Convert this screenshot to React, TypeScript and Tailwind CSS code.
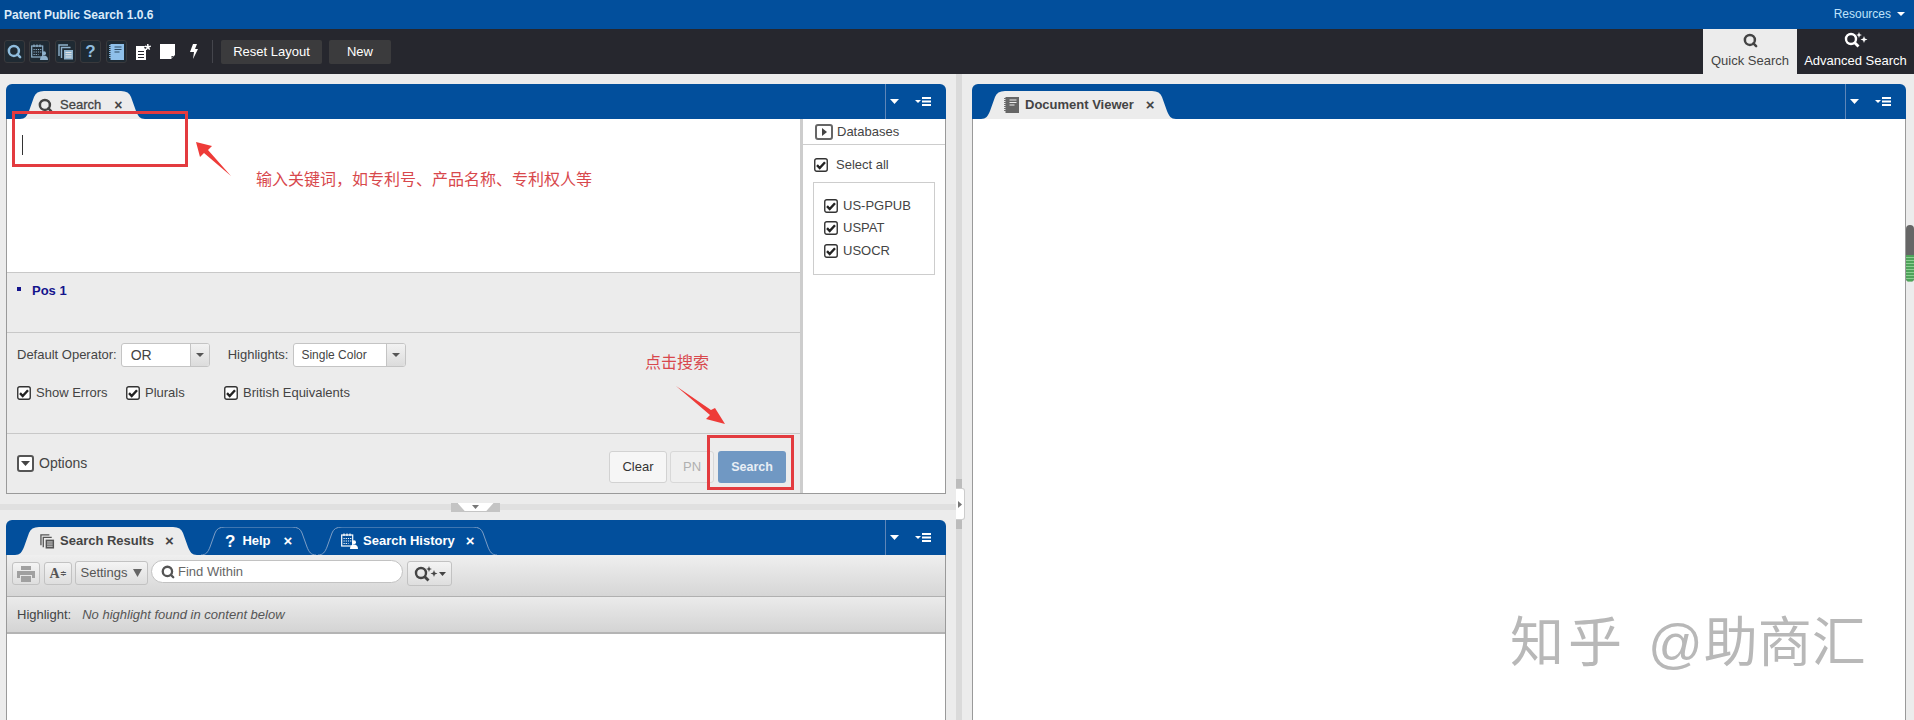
import { Search } from 'lucide-react'
import type { ReactNode } from 'react'

const BLUE = 'bg-[#024f9c]'
const ICON_BOX =
  'flex h-[23px] w-[21px] items-center justify-center rounded-[3px] border border-[#39393c] bg-[#1f2a33]'

function Caret({ className = 'fill-white', w = 9, h = 5 }: { className?: string; w?: number; h?: number }) {
  return (
    <svg width={w} height={h} viewBox="0 0 9 5" preserveAspectRatio="none" className={`shrink-0 ${className}`}>
      <path d="M0 0h9L4.5 5z" />
    </svg>
  )
}

function CheckBox() {
  return (
    <svg width="14" height="14" viewBox="0 0 14 14" className="shrink-0">
      <rect x="0.75" y="0.75" width="12.5" height="12.5" rx="2" fill="#fff" stroke="#333" strokeWidth="1.4" />
      <path d="M3 7.2l2.7 2.8L11 4.2" fill="none" stroke="#222" strokeWidth="2.4" />
    </svg>
  )
}

function CopiesIcon({ color, size = 16 }: { color: string; size?: number }) {
  return (
    <svg width={size} height={size} viewBox="0 0 16 16" fill="none" stroke={color}>
      <path d="M1 12V1h9" strokeWidth="1.4" />
      <path d="M3.5 14V3.5h9" strokeWidth="1.4" />
      <rect x="6" y="6" width="9" height="9.5" fill={color} stroke="none" />
      <path d="M7.5 8.5h6M7.5 10.7h6M7.5 13h6" stroke="#e4e4e4" strokeWidth="1" />
    </svg>
  )
}

function CalendarIcon({ color, paper = 'none' }: { color: string; paper?: string }) {
  return (
    <svg width="17" height="16" viewBox="0 0 17 16" fill="none">
      <rect x="0.7" y="2" width="11" height="11" fill={paper} stroke={color} strokeWidth="1.2" />
      <path d="M3 0.5v2.5M6 0.5v2.5M9 0.5v2.5" stroke={color} strokeWidth="1.2" />
      <path d="M2.5 5.5h8M2.5 8h8M2.5 10.5h5" stroke={color} strokeWidth="1.2" strokeDasharray="1.2 1" />
      <circle cx="13" cy="9.2" r="2" fill={color} />
      <path d="M9 16c0-3 1.5-4.5 4-4.5s4 1.500 4 4.500z" fill={color} />
    </svg>
  )
}

function NotebookIcon({ fill, line }: { fill: string; line: string }) {
  return (
    <svg width="15" height="16" viewBox="0 0 15 16">
      <rect x="1.500" y="0" width="13.500" height="16" fill={fill} />
      <path d="M0 1.500h3M0 3.500h3M0 5.500h3M0 7.500h3M0 9.500h3M0 11.500h3M0 13.500h3" stroke={fill} strokeWidth="0.9" />
      <path d="M5.500 3h7M5.500 5.500h7M5.500 8h5" stroke={line} strokeWidth="1.100" />
    </svg>
  )
}

function PlusSearchIcon({ color }: { color: string }) {
  return (
    <svg width="24" height="16" viewBox="0 0 24 16" fill="none">
      <circle cx="7" cy="7" r="5" stroke={color} strokeWidth="2.400" />
      <path d="M10.500 10.500l4 4" stroke={color} strokeWidth="2.800" />
      <path d="M15 0l.8 2.200L18 3l-2.200.8L15 6l-.8-2.200L12 3l2.200-.8zM20 4l.9 2.600L23.500 7.500l-2.600.9L20 11l-.9-2.600-2.600-.9 2.600-.9z" fill={color} />
    </svg>
  )
}

function Tab({
  width,
  active,
  className = '',
  children,
}: {
  width: number
  active?: boolean
  className?: string
  children: ReactNode
}) {
  const h = 28
  const d = `M0 ${h} C5 ${h} 7 ${h - 3} 9 ${h - 8} L14 6 Q16 0 24 0 H${width - 24} Q${width - 16} 0 ${width - 14} 6 L${width - 9} ${h - 8} C${width - 7} ${h - 3} ${width - 5} ${h} ${width} ${h}`
  return (
    <div
      style={{ width }}
      className={`relative flex h-[28px] shrink-0 items-center text-[13px] font-bold ${active ? 'text-[#444]' : 'text-white'} ${className}`}
    >
      <svg width={width} height={h} className="absolute top-0 left-0">
        <path d={d} fill={active ? '#ececec' : 'none'} stroke={active ? 'none' : '#7d9ec6'} />
      </svg>
      <div className="relative flex items-center">{children}</div>
    </div>
  )
}

function PanelHeader({ children }: { children: ReactNode }) {
  return (
    <div className={`flex h-[35px] shrink-0 items-end rounded-t-[6px] ${BLUE}`}>
      <div className="flex min-w-0 flex-1 items-end">{children}</div>
      <div className="flex h-full w-[61px] shrink-0 items-center border-l border-[#5e86b8] pl-[4px]">
        <Caret />
        <div className="ml-[16px] flex items-center gap-[1px]">
          <Caret w={6} h={3} />
          <svg width="9" height="9" viewBox="0 0 9 9" className="fill-white">
            <path d="M0 0h9v2H0zM0 3.500h9v2H0zM0 7h9v2H0z" />
          </svg>
        </div>
      </div>
    </div>
  )
}

function Select({ label, width, gap, text, textClass }: { label: string; width: string; gap: string; text: string; textClass: string }) {
  return (
    <div className={`flex items-center ${gap}`}>
      <span>{label}</span>
      <div className={`flex h-[24px] ${width} overflow-hidden rounded-[3px] border border-[#c4c4c4] bg-white`}>
        <div className={`flex flex-1 items-center ${textClass}`}>{text}</div>
        <div className="flex w-[19px] items-center justify-center border-l border-[#c4c4c4] bg-gradient-to-b from-[#f2f2f2] to-[#dcdcdc]">
          <Caret className="fill-[#555]" w={8} h={4} />
        </div>
      </div>
    </div>
  )
}

function CheckLabel({ label, className = '' }: { label: string; className?: string }) {
  return (
    <label className={`flex items-center gap-[5px] ${className}`}>
      <CheckBox />
      {label}
    </label>
  )
}

function SearchPanel() {
  return (
    <section className="flex h-[410px] shrink-0 flex-col">
      <PanelHeader>
        <Tab width={125} active className="ml-[14px] pl-[18px]">
          <Search size={15} strokeWidth={4} className="mr-[7px] text-[#444]" />
          <span className="font-normal [-webkit-text-stroke:0.3px_#444]">Search</span>
          <span className="ml-[13px] text-[14px]">×</span>
        </Tab>
      </PanelHeader>
      <div className="flex min-h-0 flex-1 border-x border-b border-[#9a9a9a]">
        <div className="flex min-w-0 flex-1 flex-col">
          <div className="h-[154px] shrink-0 border-b border-[#c8c8c8] bg-white pt-[16px] pl-[15px]">
            <div className="h-[20px] w-px bg-[#333]" />
          </div>
          <div className="flex h-[60px] shrink-0 items-start gap-[11px] border-b border-[#c8c8c8] pt-[8px] pl-[10px] text-[13px] font-bold text-[#14148c]">
            <span className="mt-[6px] h-[4px] w-[4px] bg-[#14148c]" />
            Pos 1
          </div>
          <div className="h-[101px] shrink-0 border-b border-[#c8c8c8] pt-[10px] pl-[10px] text-[13px] text-[#444]">
            <div className="flex items-center gap-[18px]">
              <Select label="Default Operator:" width="w-[89px]" gap="gap-[4px]" text="OR" textClass="pl-[9px] text-[14px]" />
              <Select label="Highlights:" width="w-[113px]" gap="gap-[5px]" text="Single Color" textClass="pl-[7px] text-[12px]" />
            </div>
            <div className="mt-[16px] flex items-center">
              <CheckLabel label="Show Errors" className="w-[109px]" />
              <CheckLabel label="Plurals" className="w-[98px]" />
              <CheckLabel label="British Equivalents" />
            </div>
          </div>
          <div className="flex flex-1 items-center justify-between pr-[14px] pl-[10px]">
            <div className="flex items-center gap-[5px] text-[14px] text-[#444]">
              <span className="flex h-[17px] w-[17px] items-center justify-center rounded-[3px] border-2 border-[#555] bg-white">
                <Caret className="fill-[#444]" w={9} h={5} />
              </span>
              Options
            </div>
            <div className="mt-[7px] flex h-[32px] items-stretch text-[13px]">
              <button className="w-[58px] rounded-[3px] border border-[#d2d2d2] bg-[#f6f6f6] text-[#333]">Clear</button>
              <button className="ml-[3px] w-[44px] rounded-[3px] border border-[#d8d8d8] bg-[#efefef] text-[#b0b0b0]">PN</button>
              <button className="ml-[4px] w-[68px] rounded-[3px] bg-[#7098c3] text-[12.5px] font-bold text-[#e8eef5]">Search</button>
            </div>
          </div>
        </div>
        <aside className="w-[145px] shrink-0 border-l-[3px] border-[#cdcdcd] bg-white text-[13px] text-[#444]">
          <div className="flex h-[26px] items-center gap-[4px] border-b border-[#cdcdcd] pl-[12px]">
            <span className="flex h-[16px] w-[18px] items-center justify-center rounded-[3px] border-2 border-[#666]">
              <svg width="5" height="8" viewBox="0 0 5 8" className="fill-[#444]"><path d="M0 0l5 4-5 4z" /></svg>
            </span>
            Databases
          </div>
          <div className="flex items-center gap-[8px] pt-[10px] pl-[11px]">
            <CheckBox />
            Select all
          </div>
          <div className="mt-[7px] ml-[10px] flex h-[93px] w-[122px] flex-col justify-center gap-[3px] border border-[#cdcdcd] pl-[10px]">
            <CheckLabel label="US-PGPUB" />
            <CheckLabel label="USPAT" />
            <CheckLabel label="USOCR" />
          </div>
        </aside>
      </div>
    </section>
  )
}

function ResultsPanel() {
  const toolBtn = 'flex items-center justify-center rounded-[3px] border border-[#c2c2c2] bg-gradient-to-b from-[#f4f4f4] to-[#dedede]'
  return (
    <section className="flex min-h-0 flex-1 flex-col">
      <PanelHeader>
        <Tab width={182} active className="ml-[9px] pl-[25px]">
          <CopiesIcon color="#555" size={15} />
          <span className="ml-[5px]">Search Results</span>
          <span className="ml-[11px] text-[15px]">×</span>
        </Tab>
        <Tab width={115} className="ml-[4px] pl-[24px]">
          <span className="text-[17px] leading-none">?</span>
          <span className="ml-[7px]">Help</span>
          <span className="ml-[13px] text-[15px]">×</span>
        </Tab>
        <Tab width={179} className="ml-[2px] pl-[23px]">
          <CalendarIcon color="#fff" />
          <span className="ml-[5px]">Search History</span>
          <span className="ml-[11px] text-[15px]">×</span>
        </Tab>
      </PanelHeader>
      <div className="flex min-h-0 flex-1 flex-col border-x border-[#9a9a9a] bg-white">
        <div className="flex h-[42px] shrink-0 items-start border-b border-[#b0b0b0] bg-gradient-to-b from-[#efefef] to-[#d6d6d6] pt-[5px] pl-[5px] text-[13px] text-[#555]">
          <button className={`mt-[2px] h-[23px] w-[28px] ${toolBtn}`}>
            <svg width="18" height="16" viewBox="0 0 18 16" className="fill-[#a0a0a0]">
              <path d="M4 0h10v4H4zM0 5h18v7h-3V9H3v3H0zM4 10h10v6H4z" />
            </svg>
          </button>
          <button className={`mt-[2px] ml-[4px] h-[23px] w-[28px] text-[14px] font-bold text-[#555] [font-family:'Liberation_Serif',serif] ${toolBtn}`}>
            A<span className="text-[8px] font-normal">≑</span>
          </button>
          <button className={`mt-[1px] ml-[3px] h-[24px] w-[73px] gap-[6px] text-[13px] ${toolBtn}`}>
            Settings
            <Caret className="fill-[#666]" w={9} h={8} />
          </button>
          <div className="ml-[3px] flex h-[23px] w-[252px] items-center gap-[3px] rounded-full border border-[#c2c2c2] bg-white pl-[9px] text-[#666]">
            <Search size={14} strokeWidth={4} className="text-[#555]" />
            Find Within
          </div>
          <button className={`mt-[1px] ml-[4px] h-[25px] w-[45px] gap-[1px] ${toolBtn}`}>
            <PlusSearchIcon color="#444" />
            <Caret className="fill-[#444]" w={7} h={4} />
          </button>
        </div>
        <div className="flex h-[37px] shrink-0 items-center gap-[11px] border-b-2 border-[#b4b4b4] bg-gradient-to-b from-[#ebebeb] to-[#d4d4d4] pl-[10px] text-[13px] text-[#444]">
          Highlight:
          <i className="text-[#555]">No highlight found in content below</i>
        </div>
      </div>
    </section>
  )
}

export default function App() {
  return (
    <div className="relative flex h-[720px] w-[1914px] flex-col overflow-hidden bg-[#ececec] [font-family:'Liberation_Sans','Noto_Sans_CJK_SC',sans-serif]">
      <header className={`flex h-[29px] shrink-0 items-center justify-between ${BLUE}`}>
        <div className="flex h-full w-[160px] items-center bg-[#004993] pl-[4px] text-[12px] font-bold text-[#dcebf8]">
          Patent Public Search 1.0.6
        </div>
        <div className="flex items-center gap-[6px] pr-[9px] pb-[2px] text-[12px] text-[#bfe3fb]">
          Resources
          <Caret w={8} h={4} />
        </div>
      </header>

      <div className="flex h-[45px] shrink-0 items-stretch bg-[#26272e]">
        <div className="flex flex-1 items-center gap-[2px] pl-[4px]">
          <div className={ICON_BOX}><Search size={15} strokeWidth={4} className="text-[#8fbcdd]" /></div>
          <div className={`ml-[2px] ${ICON_BOX}`}><CalendarIcon color="#8fb2cc" /></div>
          <div className={`ml-[3px] ${ICON_BOX}`}><CopiesIcon color="#8fb2cc" /></div>
          <div className={`ml-[2px] ${ICON_BOX} text-[17px] font-bold text-[#8fbcdd]`}>?</div>
          <div className={`ml-[3px] border-[#111] ${ICON_BOX}`}><NotebookIcon fill="#8fc0ea" line="#2d4a63" /></div>
          <svg width="15" height="16" viewBox="0 0 15 16" className="ml-[7px] fill-white">
            <path d="M0 2h9l-1 2 2 1v11H0zM2 7v1h6V7zM2 10v1h6v-1zM2 13v1h6v-1zM11 0h1.500l.2 2 2-.5.300 1.300-1.900.8 1.100 1.700-1.100.8-1.200-1.700-1.200 1.700-1.100-.8 1.100-1.700-1.900-.8.300-1.300 2 .5z" />
          </svg>
          <svg width="15" height="15" viewBox="0 0 15 15" className="ml-[7px] fill-white">
            <path d="M0 0h15v11l-4 4H0zM11.500 12v2l2-2z" />
          </svg>
          <svg width="8" height="15" viewBox="0 0 8 15" className="ml-[13px] fill-white">
            <path d="M3 0h4L5 5h3l-5 10 1-7H0z" />
          </svg>
          <div className="ml-[12px] h-[23px] w-px bg-[#44454c]" />
          <button className="ml-[6px] h-[24px] w-[101px] rounded-[2px] bg-[#3b3b3d] text-[13px] text-white">Reset Layout</button>
          <button className="ml-[5px] h-[24px] w-[62px] rounded-[2px] bg-[#3b3b3d] text-[13px] text-white">New</button>
        </div>
        <div className="flex w-[94px] flex-col items-center justify-center gap-[3px] bg-[#ececec] text-[13px] text-[#444]">
          <Search size={15} strokeWidth={4} className="text-[#444]" />
          Quick Search
        </div>
        <div className="flex w-[117px] flex-col items-center justify-center gap-[3px] text-[13px] whitespace-nowrap text-white">
          <PlusSearchIcon color="#fff" />
          Advanced Search
        </div>
      </div>

      <main className="flex min-h-0 flex-1">
        <div className="flex w-[956px] shrink-0 flex-col pt-[10px] pr-[10px] pl-[6px]">
          <SearchPanel />
          <div className="relative mt-[10px] mr-[-10px] mb-[10px] ml-[-6px] h-[6px] shrink-0 bg-[#e0e0e0]">
            <div className="absolute top-[-1px] left-[451px] flex h-[9px] w-[49px] justify-center bg-[#c4c4c4]">
              <div className="flex h-[8px] w-[36px] items-start justify-center bg-white pt-[2px] [clip-path:polygon(0_0,100%_0,80%_100%,20%_100%)]">
                <Caret className="fill-[#777]" w={7} h={4} />
              </div>
            </div>
          </div>
          <ResultsPanel />
        </div>

        <div className="relative w-[6px] shrink-0 bg-[#dadada]">
          <div className="absolute top-[405px] left-0 h-[50px] w-[6px] bg-[#bcbcbc]" />
          <div className="absolute top-[414px] left-0 flex h-[32px] w-[9px] items-center justify-center rounded-r-[3px] border border-l-0 border-[#ccc] bg-white">
            <svg width="4" height="7" viewBox="0 0 4 7" className="fill-[#777]"><path d="M0 0l4 3.500L0 7z" /></svg>
          </div>
        </div>

        <div className="flex min-w-0 flex-1 flex-col pt-[10px] pr-[8px] pl-[10px]">
          <PanelHeader>
            <Tab width={195} active className="ml-[9px] pl-[23px]">
              <NotebookIcon fill="#666" line="#eee" />
              <span className="ml-[6px]">Document Viewer</span>
              <span className="ml-[12px] text-[15px]">×</span>
            </Tab>
          </PanelHeader>
          <div className="flex-1 border-x border-[#9a9a9a] bg-white" />
        </div>
      </main>

      {/* scroll marker sitting on the window edge */}
      <div className="absolute top-[225px] right-0 h-[57px] w-[8px] overflow-hidden rounded-[4px] bg-[#666]">
        <div className="mt-[30px] h-[27px] bg-[repeating-linear-gradient(#4fa35a_0,#4fa35a_2px,#8ccf92_2px,#8ccf92_3px)]" />
      </div>

      {/* annotations drawn over the screenshot */}
      <div className="absolute top-[111px] left-[12px] h-[56px] w-[176px] border-[3px] border-[#e33b3f]" />
      <div className="absolute top-[435px] left-[707px] h-[55px] w-[87px] border-[3px] border-[#e33b3f]" />
      <div className="absolute top-[168px] left-[256px] text-[16px] text-[#d8484c]">输入关键词，如专利号、产品名称、专利权人等</div>
      <div className="absolute top-[351px] left-[645px] text-[16px] text-[#d8484c]">点击搜索</div>
      <svg width="1914" height="720" className="pointer-events-none absolute top-0 left-0 fill-[#ee3b38]">
        <polygon points="196,142 212,146 208,150 231,176 204,153 200,157" />
        <polygon points="676,386 711,410 715,408 725,424 706,419 710,415" />
      </svg>
      <div className="absolute top-[613px] left-[1510px] flex items-center leading-[60px] whitespace-nowrap text-[#b8b8b8]">
        <span className="text-[54px] tracking-[4px]">知乎</span>
        <span className="ml-[22px] text-[54px]">@</span>
        <span className="ml-[1px] text-[54px]">助商汇</span>
      </div>
    </div>
  )
}
